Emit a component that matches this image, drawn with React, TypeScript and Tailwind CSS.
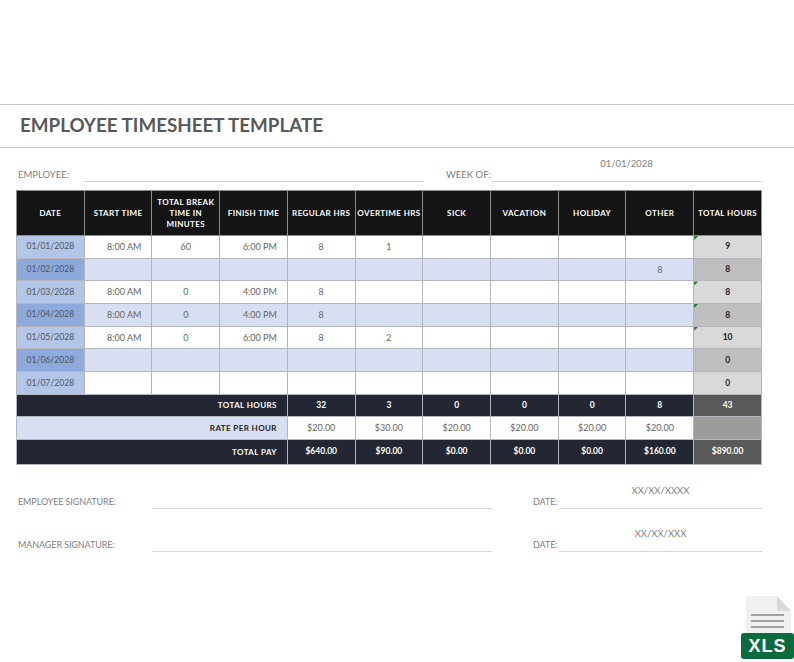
const font = "font-['Lato','Liberation_Sans',sans-serif]";

const heads = ["DATE", "START TIME", "TOTAL BREAK TIME IN MINUTES", "FINISH TIME", "REGULAR HRS", "OVERTIME HRS", "SICK", "VACATION", "HOLIDAY", "OTHER", "TOTAL HOURS"];

// date, start, break, finish, regular, overtime, sick, vacation, holiday, other, total, flagged
const rows: [string, string, string, string, string, string, string, string, string, string, string, boolean][] = [
  ["01/01/2028", "8:00 AM", "60", "6:00 PM", "8", "1", "", "", "", "", "9", true],
  ["01/02/2028", "", "", "", "", "", "", "", "", "8", "8", false],
  ["01/03/2028", "8:00 AM", "0", "4:00 PM", "8", "", "", "", "", "", "8", true],
  ["01/04/2028", "8:00 AM", "0", "4:00 PM", "8", "", "", "", "", "", "8", true],
  ["01/05/2028", "8:00 AM", "0", "6:00 PM", "8", "2", "", "", "", "", "10", true],
  ["01/06/2028", "", "", "", "", "", "", "", "", "", "0", false],
  ["01/07/2028", "", "", "", "", "", "", "", "", "", "0", false],
];

const totals = ["32", "3", "0", "0", "0", "8"];
const rates = ["$20.00", "$30.00", "$20.00", "$20.00", "$20.00", "$20.00"];
const pays = ["$640.00", "$90.00", "$0.00", "$0.00", "$0.00", "$160.00"];

function Field({ label, value, labelW, lineW, small }: { label: string; value?: string; labelW: string; lineW: string; small?: boolean }) {
  return (
    <div className="flex items-end">
      <span className={`${labelW} ${small ? "text-[9px] tracking-[-0.1px]" : "text-[9.5px]"} leading-[14px] text-[#7f7f7f]`}>{label}</span>
      <div className={`${lineW} relative border-b border-[#d4d4d4] h-[14px]`}>
        {value && <span className="absolute left-0 right-0 -top-[11px] text-center text-[9.5px] leading-[14px] text-[#7f7f7f]">{value}</span>}
      </div>
    </div>
  );
}

function SummaryRow({ label, cells, kind }: { label: string; cells: string[]; kind: "total" | "rate" | "pay" }) {
  const dark = kind !== "rate";
  const h = kind === "pay" ? "h-[25px]" : kind === "rate" ? "h-[23px]" : "h-[22px]";
  return (
    <tr className={h}>
      <td colSpan={4} className={`border border-[#b3b6bd] pr-[10px] text-right text-[8px] font-bold tracking-[0.4px] ${dark ? "bg-[#222733] text-white" : "bg-[#d9dff2] text-[#222]"}`}>
        {label}
      </td>
      {cells.map((c, i) => (
        <td key={i} className={`border border-[#b3b6bd] text-center ${dark ? "bg-[#222733] text-white font-bold text-[8.5px]" : "bg-white text-[#666] text-[9px]"}`}>
          {c}
        </td>
      ))}
      {kind === "rate" ? (
        <td className="border border-[#b3b6bd] bg-[conic-gradient(#7d7d7d_25%,#b8b8b8_0_50%,#7d7d7d_0_75%,#b8b8b8_0)] bg-[length:2px_2px]" />
      ) : (
        <td className="border border-[#b3b6bd] bg-[#595959] text-center text-[8.5px] font-bold text-white">
          {kind === "total" ? "43" : "$890.00"}
        </td>
      )}
    </tr>
  );
}

export default function App() {
  return (
    <div className={`${font} w-[794px] h-[662px] overflow-hidden bg-white relative`}>
      <div className="mt-[104px] border-t border-b border-[#c8c8c8] h-[44px] pl-[20px] pb-[2px] flex items-center">
        <h1 className="text-[18.8px] font-bold leading-none text-[#595959]">EMPLOYEE TIMESHEET TEMPLATE</h1>
      </div>

      <div className="flex pl-[18px] pt-[20px] gap-[22px]">
        <Field label="EMPLOYEE:" labelW="w-[66px]" lineW="w-[340px]" />
        <Field label="WEEK OF:" value="01/01/2028" labelW="w-[45px]" lineW="w-[271px]" />
      </div>

      <div className="pl-[16px] pt-[8px]">
        <table className="w-[746px] table-fixed border-collapse">
          <thead>
            <tr className="h-[45px]">
              {heads.map((h, i) => (
                <th key={h} className={`border border-[#8d8d8d] bg-[#141414] text-center text-[8px] font-bold leading-[11px] tracking-[0.4px] text-white ${i === 2 ? "px-[2px]" : "whitespace-nowrap"}`}>
                  {h}
                </th>
              ))}
            </tr>
          </thead>
          <tbody>
            {rows.map((r, i) => {
              const odd = i % 2 === 1;
              return (
                <tr key={r[0]} className="h-[22.7px]">
                  <td className={`border border-[#b3b6bd] text-center text-[8.6px] text-[#4d5666] ${odd ? "bg-[#8ea9db]" : "bg-[#b4c6e7]"}`}>{r[0]}</td>
                  {r.slice(1, 10).map((c, j) => (
                    <td
                      key={j}
                      className={`border border-[#b3b6bd] text-[9px] text-[#666] ${odd ? "bg-[#d9dff2]" : "bg-white"} ${j === 0 || j === 2 ? "text-right pr-[10px]" : "text-center"}`}
                    >
                      {c as string}
                    </td>
                  ))}
                  <td className={`relative border border-[#b3b6bd] text-center text-[8.5px] font-bold text-[#222] ${odd ? "bg-[#bfbfbf]" : "bg-[#d9d9d9]"}`}>
                    {r[10]}
                    {r[11] && <span className="absolute left-0 top-0 w-[4px] h-[4px] bg-[#1f7a2e] [clip-path:polygon(0_0,100%_0,0_100%)]" />}
                  </td>
                </tr>
              );
            })}
            <SummaryRow label="TOTAL HOURS" cells={totals} kind="total" />
            <SummaryRow label="RATE PER HOUR" cells={rates} kind="rate" />
            <SummaryRow label="TOTAL PAY" cells={pays} kind="pay" />
          </tbody>
        </table>
      </div>

      <div className="pl-[18px] pt-[30px] flex flex-col gap-[29px]">
        <div className="flex gap-[41px]">
          <Field small label="EMPLOYEE SIGNATURE:" labelW="w-[134px]" lineW="w-[340px]" />
          <Field small label="DATE:" value="XX/XX/XXXX" labelW="w-[26px]" lineW="w-[203px]" />
        </div>
        <div className="flex gap-[41px]">
          <Field small label="MANAGER SIGNATURE:" labelW="w-[134px]" lineW="w-[340px]" />
          <Field small label="DATE:" value="XX/XX/XXX" labelW="w-[26px]" lineW="w-[203px]" />
        </div>
      </div>

      {/* file badge */}
      <div className="absolute left-[741px] top-[596px] w-[53px] h-[66px]">
        <svg viewBox="0 0 53 66" className="absolute inset-0 w-full h-full">
          <path d="M5 0 H36 L50 15 V63 H5 Z" fill="#f0f0f0" />
          <path d="M36 0 L50 15 H36 Z" fill="#d9d9d9" />
          <rect x="10" y="18" width="33" height="2" fill="#a0a0a0" />
          <rect x="10" y="24" width="33" height="2" fill="#a0a0a0" />
          <rect x="10" y="30" width="33" height="2" fill="#a0a0a0" />
        </svg>
        <div className="absolute left-0 right-0 top-[37px] h-[26px] rounded-[3px] bg-[#0b6b3f] flex items-center justify-center text-white text-[18px] font-bold font-['Liberation_Sans',sans-serif] tracking-[1px]">
          XLS
        </div>
      </div>
    </div>
  );
}
